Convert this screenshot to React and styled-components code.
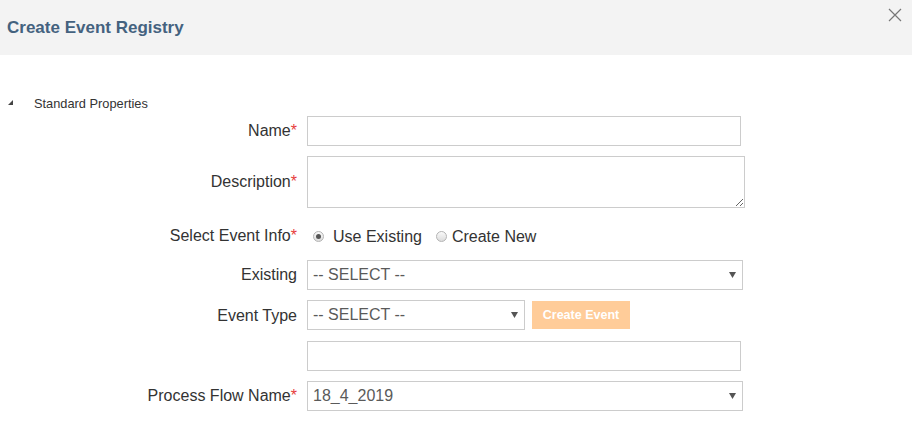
import React from "react";
import styled, { createGlobalStyle } from "styled-components";

const Global = createGlobalStyle`
  html, body { margin: 0; padding: 0; background: #fff; }
  body { font-family: "Liberation Sans", Arial, sans-serif; color: #333; }
  * { box-sizing: border-box; }
`;

const Dialog = styled.div`
  width: 912px;
  height: 422px;
  background: #fff;
  overflow: hidden;
`;

const Header = styled.div`
  height: 55px;
  background: #f3f3f3;
  display: flex;
  align-items: center;
  justify-content: space-between;
  padding-left: 7px;
`;

const Title = styled.h1`
  margin: 0;
  font-size: 17px;
  font-weight: bold;
  color: #44627f;
  line-height: 20px;
  margin-top: 1px;
`;

const CloseButton = styled.button`
  align-self: flex-start;
  margin: 7px 9px 0 0;
  width: 16px;
  height: 16px;
  padding: 0;
  border: none;
  background: transparent;
  display: flex;
  align-items: center;
  justify-content: center;
  cursor: pointer;
`;

const Body = styled.div`
  padding-top: 41px;
`;

const SectionToggle = styled.div`
  display: flex;
  align-items: center;
  height: 14px;
  padding-left: 8px;
  gap: 20px;
  font-size: 12.8px;
  color: #333;
`;

const Form = styled.div`
  display: flex;
  flex-direction: column;
  gap: 10px;
  margin-top: 6px;
`;

const Row = styled.div`
  display: grid;
  grid-template-columns: 297px 1fr;
  column-gap: 10px;
  align-items: ${(p) => (p.$top ? "start" : "center")};
  min-height: ${(p) => p.$h || 30}px;
  padding-top: ${(p) => p.$pt || 0}px;
`;

const Label = styled.label`
  justify-self: end;
  align-self: center;
  font-size: 16px;
  color: #333;
  white-space: nowrap;
`;

const Req = styled.span`
  color: #e63c3c;
`;

const TextInput = styled.input`
  width: ${(p) => p.$w}px;
  height: 30px;
  border: 1px solid #ccc;
  padding: 0 5px;
  font: 16px "Liberation Sans", Arial, sans-serif;
  color: #555;
  outline: none;
  display: block;
`;

const TextArea = styled.textarea`
  width: 438px;
  height: 52px;
  border: 1px solid #ccc;
  padding: 5px;
  font: 16px "Liberation Sans", Arial, sans-serif;
  outline: none;
  display: block;
`;

const SelectWrap = styled.div`
  position: relative;
  width: ${(p) => p.$w}px;
  height: 30px;
`;

const Select = styled.select`
  appearance: none;
  -webkit-appearance: none;
  width: 100%;
  height: 100%;
  border: 1px solid #ccc;
  border-radius: 0;
  background: #fff;
  padding: 0 20px 2px 5px;
  font: 16px "Liberation Sans", Arial, sans-serif;
  color: #5a5a5a;
  outline: none;
  display: block;
`;

const Arrow = styled.svg`
  position: absolute;
  right: 7px;
  top: 12px;
  pointer-events: none;
`;

const Inline = styled.div`
  display: flex;
  align-items: flex-start;
`;

const RadioGroup = styled.div`
  display: flex;
  align-items: center;
  padding-left: 6px;
  padding-top: 2px;
  font-size: 16px;
  color: #333;
`;

const RadioOption = styled.label`
  display: flex;
  align-items: center;
  gap: 9px;
  margin-right: 14px;
  &:last-child { gap: 5px; }
`;

const RadioDot = styled.span`
  width: 11px;
  height: 11px;
  border-radius: 50%;
  border: 1px solid #b4b4b4;
  background: linear-gradient(#fafafa, #dcdcdc);
  display: flex;
  align-items: center;
  justify-content: center;
  &::after {
    content: "";
    width: 5px;
    height: 5px;
    border-radius: 50%;
    background: ${(p) => (p.$checked ? "#555" : "transparent")};
  }
`;

const ActionButton = styled.button`
  margin-left: 7px;
  margin-top: 1px;
  width: 98px;
  height: 28px;
  border: none;
  background: #ffcc99;
  color: #fff;
  font: bold 12.5px "Liberation Sans", Arial, sans-serif;
  padding: 0;
  cursor: pointer;
`;

const DropArrow = () => (
  <Arrow width="7" height="6" viewBox="0 0 7 6">
    <polygon points="0,0 7,0 3.5,6" fill="#555" />
  </Arrow>
);

const Field = ({ label, required, children, h, pt, top }) => (
  <Row $h={h} $pt={pt} $top={top}>
    <Label>
      {label}
      {required && <Req>*</Req>}
    </Label>
    <div>{children}</div>
  </Row>
);

export default function App() {
  return (
    <>
      <Global />
      <Dialog>
        <Header>
          <Title>Create Event Registry</Title>
          <CloseButton aria-label="Close">
            <svg width="14" height="14" viewBox="0 0 14 14">
              <path d="M1 1 L13 13 M13 1 L1 13" stroke="#777" strokeWidth="1.2" />
            </svg>
          </CloseButton>
        </Header>
        <Body>
          <SectionToggle>
            <svg width="6" height="6" viewBox="0 0 6 6">
              <polygon points="5,0 5,5 0,5" fill="#444" />
            </svg>
            <span>Standard Properties</span>
          </SectionToggle>
          <Form>
            <Field label="Name" required>
              <TextInput $w={434} />
            </Field>
            <Field label="Description" required h={52}>
              <TextArea />
            </Field>
            <Field label="Select Event Info" required h={32} pt={3}>
              <RadioGroup>
                <RadioOption>
                  <RadioDot $checked />
                  Use Existing
                </RadioOption>
                <RadioOption>
                  <RadioDot />
                  Create New
                </RadioOption>
              </RadioGroup>
            </Field>
            <Field label="Existing">
              <SelectWrap $w={436}>
                <Select defaultValue="">
                  <option value="">-- SELECT --</option>
                </Select>
                <DropArrow />
              </SelectWrap>
            </Field>
            <Field label="Event Type" h={31} top>
              <Inline>
                <SelectWrap $w={218}>
                  <Select defaultValue="">
                    <option value="">-- SELECT --</option>
                  </Select>
                  <DropArrow />
                </SelectWrap>
                <ActionButton>Create Event</ActionButton>
              </Inline>
            </Field>
            <Field label="">
              <TextInput $w={434} />
            </Field>
            <Field label="Process Flow Name" required>
              <SelectWrap $w={436}>
                <Select defaultValue="18_4_2019">
                  <option value="18_4_2019">18_4_2019</option>
                </Select>
                <DropArrow />
              </SelectWrap>
            </Field>
          </Form>
        </Body>
      </Dialog>
    </>
  );
}
